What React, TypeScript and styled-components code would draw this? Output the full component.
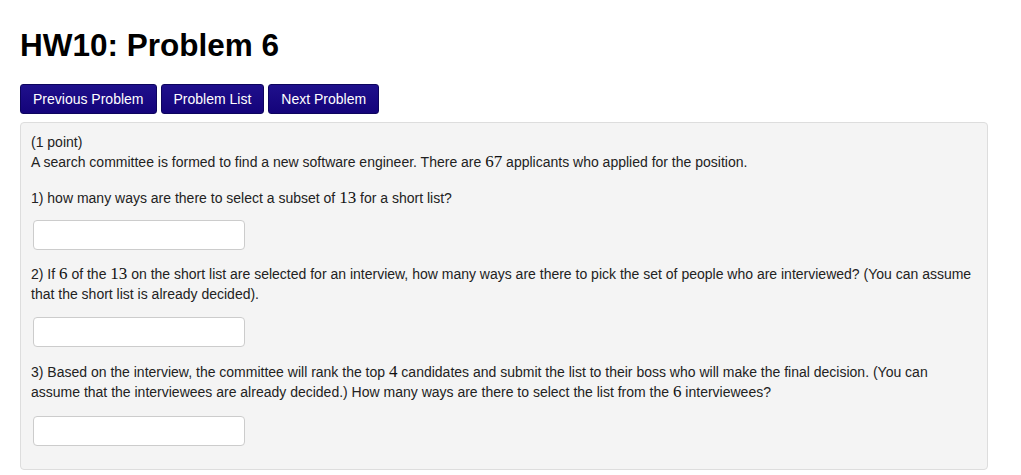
import React from "react";
import styled, { createGlobalStyle } from "styled-components";

const Global = createGlobalStyle`
  html, body { margin: 0; padding: 0; background: #fff; }
  body { font-family: "Liberation Sans", Arial, sans-serif; color: #222; }
`;

const Page = styled.div`
  padding: 0 33px 0 20px;
`;

const Title = styled.h1`
  margin: 0;
  padding-top: 26px;
  font-size: 31.5px;
  line-height: 38px;
  font-weight: bold;
  color: #000;
`;

const Nav = styled.div`
  display: flex;
  gap: 4px;
  margin-top: 20px;
`;

const NavButton = styled.button`
  height: 30px;
  padding: 0 12px;
  border: 1px solid #0d045e;
  border-radius: 3px;
  background: linear-gradient(#1f108c, #14037a);
  color: #fff;
  font-family: "Liberation Sans", Arial, sans-serif;
  font-size: 14px;
  cursor: pointer;
`;

const Panel = styled.div`
  margin-top: 8px;
  background: #f4f4f4;
  border: 1px solid #dddddd;
  border-radius: 4px;
  padding: 9px 9px 23px 10px;
  font-size: 14px;
  line-height: 20px;
  color: #222;
`;

const Para = styled.p<{ $top?: number }>`
  margin: ${(p) => p.$top ?? 0}px 0 0 0;
`;

const M = styled.span`
  font-family: "Liberation Serif", "Times New Roman", serif;
  font-size: 17px;
  line-height: 1;
  color: #111;
`;

const Answer = styled.input<{ $top: number }>`
  display: block;
  box-sizing: border-box;
  width: 212px;
  height: 30px;
  margin: ${(p) => p.$top}px 0 0 2px;
  background: #fff;
  border: 1px solid #cccccc;
  border-radius: 4px;
  font-size: 14px;
  padding: 4px 6px;
  outline: none;
`;

export default function App() {
  return (
    <>
      <Global />
      <Page>
        <Title>HW10: Problem 6</Title>
        <Nav>
          <NavButton>Previous Problem</NavButton>
          <NavButton>Problem List</NavButton>
          <NavButton>Next Problem</NavButton>
        </Nav>
        <Panel>
          <Para>(1 point)</Para>
          <Para>
            A search committee is formed to find a new software engineer. There are <M>67</M> applicants who
            applied for the position.
          </Para>
          <Para $top={16}>
            1) how many ways are there to select a subset of <M>13</M> for a short list?
          </Para>
          <Answer type="text" $top={12} />
          <Para $top={14}>
            2) If <M>6</M> of the <M>13</M> on the short list are selected for an interview, how many ways are
            there to pick the set of people who are interviewed? (You can assume that the short list is already
            decided).
          </Para>
          <Answer type="text" $top={13} />
          <Para $top={15}>
            3) Based on the interview, the committee will rank the top <M>4</M> candidates and submit the list to
            their boss who will make the final decision. (You can assume that the interviewees are already
            decided.) How many ways are there to select the list from the <M>6</M> interviewees?
          </Para>
          <Answer type="text" $top={14} />
        </Panel>
      </Page>
    </>
  );
}
